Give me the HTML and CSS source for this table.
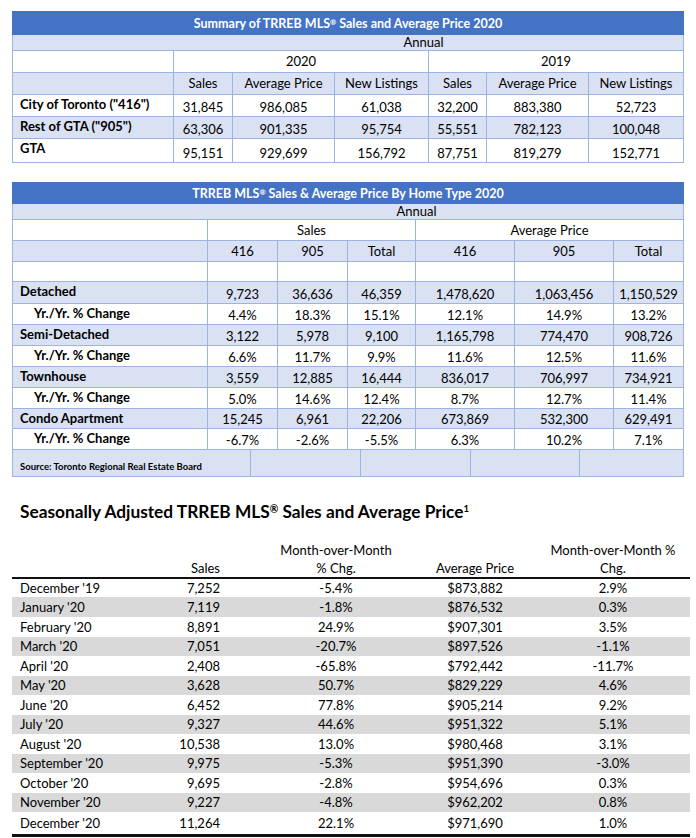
FILE: index.html
```html
<!DOCTYPE html>
<html>
<head>
<meta charset="utf-8">
<link rel="stylesheet" href="styles.css">
</head>
<body>
<div class="page">

<table class="grid t1">
  <colgroup>
    <col class="w161"><col class="w59"><col class="w102"><col class="w94"><col class="w58"><col class="w102"><col class="w95">
  </colgroup>
  <tr class="title"><td colspan="7">Summary of TRREB MLS<sup>®</sup> Sales and Average Price 2020</td></tr>
  <tr class="annual"><td colspan="7" class="ann1">Annual</td></tr>
  <tr class="mid h22"><td></td><td colspan="3">2020</td><td colspan="3">2019</td></tr>
  <tr class="mid h22 shade"><td></td><td>Sales</td><td>Average Price</td><td>New Listings</td><td>Sales</td><td>Average Price</td><td>New Listings</td></tr>
  <tr class="data h22"><td class="lbl">City of Toronto ("416")</td><td>31,845</td><td>986,085</td><td>61,038</td><td>32,200</td><td>883,380</td><td>52,723</td></tr>
  <tr class="data h22 shade"><td class="lbl">Rest of GTA ("905")</td><td>63,306</td><td>901,335</td><td>95,754</td><td>55,551</td><td>782,123</td><td>100,048</td></tr>
  <tr class="data h24"><td class="lbl">GTA</td><td>95,151</td><td>929,699</td><td>156,792</td><td>87,751</td><td>819,279</td><td>152,771</td></tr>
</table>

<table class="grid t2">
  <colgroup>
    <col class="w195"><col class="w70"><col class="w70"><col class="w68"><col class="w99"><col class="w99"><col class="w70">
  </colgroup>
  <tr class="title t2title"><td colspan="7">TRREB MLS<sup>®</sup> Sales &amp; Average Price By Home Type 2020</td></tr>
  <tr class="annual"><td colspan="7" class="ann2">Annual</td></tr>
  <tr class="mid h21"><td></td><td colspan="3">Sales</td><td colspan="3">Average Price</td></tr>
  <tr class="mid h21 shade"><td></td><td>416</td><td>905</td><td>Total</td><td>416</td><td>905</td><td>Total</td></tr>
  <tr class="mid h20"><td></td><td></td><td></td><td></td><td></td><td></td><td></td></tr>
  <tr class="data shade h22"><td class="lbl">Detached</td><td>9,723</td><td>36,636</td><td>46,359</td><td>1,478,620</td><td>1,063,456</td><td>1,150,529</td></tr>
  <tr class="data h21"><td class="lbl sub">Yr./Yr. % Change</td><td>4.4%</td><td>18.3%</td><td>15.1%</td><td>12.1%</td><td>14.9%</td><td>13.2%</td></tr>
  <tr class="data shade h21"><td class="lbl">Semi-Detached</td><td>3,122</td><td>5,978</td><td>9,100</td><td>1,165,798</td><td>774,470</td><td>908,726</td></tr>
  <tr class="data h21"><td class="lbl sub">Yr./Yr. % Change</td><td>6.6%</td><td>11.7%</td><td>9.9%</td><td>11.6%</td><td>12.5%</td><td>11.6%</td></tr>
  <tr class="data shade h21"><td class="lbl">Townhouse</td><td>3,559</td><td>12,885</td><td>16,444</td><td>836,017</td><td>706,997</td><td>734,921</td></tr>
  <tr class="data h21"><td class="lbl sub">Yr./Yr. % Change</td><td>5.0%</td><td>14.6%</td><td>12.4%</td><td>8.7%</td><td>12.7%</td><td>11.4%</td></tr>
  <tr class="data shade h20"><td class="lbl">Condo Apartment</td><td>15,245</td><td>6,961</td><td>22,206</td><td>673,869</td><td>532,300</td><td>629,491</td></tr>
  <tr class="data h21"><td class="lbl sub">Yr./Yr. % Change</td><td>-6.7%</td><td>-2.6%</td><td>-5.5%</td><td>6.3%</td><td>10.2%</td><td>7.1%</td></tr>
</table>
<table class="grid src">
  <colgroup>
    <col class="w238"><col class="w110"><col class="w110"><col class="w109"><col class="w104">
  </colgroup>
  <tr class="shade"><td class="srctxt">Source: Toronto Regional Real Estate Board</td><td></td><td></td><td></td><td></td></tr>
</table>

<h2 class="sa-title">Seasonally Adjusted TRREB MLS<sup>®</sup> Sales and Average Price<sup class="fn">1</sup></h2>

<table class="sa">
  <colgroup>
    <col class="s1"><col class="s2"><col class="s3"><col class="s4"><col class="s5">
  </colgroup>
  <thead>
  <tr class="sahead"><th></th><th class="num">Sales</th><th>Month-over-Month<br>% Chg.</th><th>Average Price</th><th class="last">Month-over-Month %<br>Chg.</th></tr>
  </thead>
  <tbody>
  <tr class="r18"><td>December '19</td><td class="num">7,252</td><td>-5.4%</td><td>$873,882</td><td class="last">2.9%</td></tr>
  <tr class="g r20"><td>January '20</td><td class="num">7,119</td><td>-1.8%</td><td>$876,532</td><td class="last">0.3%</td></tr>
  <tr class="r20"><td>February '20</td><td class="num">8,891</td><td>24.9%</td><td>$907,301</td><td class="last">3.5%</td></tr>
  <tr class="g r19"><td>March '20</td><td class="num">7,051</td><td>-20.7%</td><td>$897,526</td><td class="last">-1.1%</td></tr>
  <tr class="r20"><td>April '20</td><td class="num">2,408</td><td>-65.8%</td><td>$792,442</td><td class="last">-11.7%</td></tr>
  <tr class="g r19"><td>May '20</td><td class="num">3,628</td><td>50.7%</td><td>$829,229</td><td class="last">4.6%</td></tr>
  <tr class="r20"><td>June '20</td><td class="num">6,452</td><td>77.8%</td><td>$905,214</td><td class="last">9.2%</td></tr>
  <tr class="g r19"><td>July '20</td><td class="num">9,327</td><td>44.6%</td><td>$951,322</td><td class="last">5.1%</td></tr>
  <tr class="r20"><td>August '20</td><td class="num">10,538</td><td>13.0%</td><td>$980,468</td><td class="last">3.1%</td></tr>
  <tr class="g r19"><td>September '20</td><td class="num">9,975</td><td>-5.3%</td><td>$951,390</td><td class="last">-3.0%</td></tr>
  <tr class="r20"><td>October '20</td><td class="num">9,695</td><td>-2.8%</td><td>$954,696</td><td class="last">0.3%</td></tr>
  <tr class="g r19"><td>November '20</td><td class="num">9,227</td><td>-4.8%</td><td>$962,202</td><td class="last">0.8%</td></tr>
  <tr class="end"><td>December '20</td><td class="num">11,264</td><td>22.1%</td><td>$971,690</td><td class="last">1.0%</td></tr>
  </tbody>
</table>

</div>
</body>
</html>
```

FILE: styles.css
```css
html, body {
  margin: 0;
  padding: 0;
  background: #ffffff;
  overflow: hidden;
}
body {
  font-family: Lato, "Open Sans", "DejaVu Sans", sans-serif;
  color: #000000;
  font-size: 13px;
}
.page {
  padding: 11px 0 0 12px;
}

/* generic grid tables */
.grid {
  border-collapse: collapse;
  table-layout: fixed;
  width: 671px;
}
.grid td {
  border: 1px solid #9cb4e2;
  padding: 0 2px;
  text-align: center;
  vertical-align: bottom;
  line-height: 15px;
  white-space: nowrap;
  overflow: hidden;
}
.shade td { background: #d9e1f2; }

.w161 { width: 161px; } .w59 { width: 59px; } .w102 { width: 102px; }
.w94 { width: 94px; } .w58 { width: 58px; } .w95 { width: 95px; }
.w195 { width: 195px; } .w70 { width: 70px; } .w68 { width: 68px; } .w99 { width: 99px; }
.w238 { width: 238px; } .w110 { width: 110px; } .w109 { width: 109px; } .w104 { width: 104px; }

.title td {
  background: #4472c4;
  border-color: #4472c4;
  color: #ffffff;
  font-weight: 700;
  height: 22px;
  vertical-align: middle;
  font-size: 12.5px;
}
.t2title td { height: 20px; }
sup {
  font-size: 0.6em;
  vertical-align: 0.45em;
  line-height: 0;
}
.annual td {
  background: #d9e1f2;
  height: 15px;
  vertical-align: middle;
}
.ann1 { padding-left: 153px !important; }
.ann2 { padding-left: 139px !important; }

/* row heights: total = height + vertical padding + 1px border */
.mid td { vertical-align: middle; }
.mid.h22 td { height: 21px; }
.mid.h21 td { height: 20px; }
.mid.h20 td { height: 19px; }

.data td { padding-bottom: 1px; vertical-align: bottom; }
.data.h24 td { height: 22px; }
.data.h22 td { height: 20px; }
.data.h21 td { height: 19px; }
.data.h20 td { height: 18px; }

.data td.lbl {
  text-align: left;
  vertical-align: top;
  font-weight: 700;
  padding: 2px 0 0 7px;
}
.data.h24 td.lbl { height: 21px; }
.data.h22 td.lbl { height: 19px; }
.data.h21 td.lbl { height: 18px; }
.data.h20 td.lbl { height: 17px; }
.data td.sub { padding-left: 21px; }

.t2 { margin-top: 19px; }

.src td {
  border-top: none;
  height: 26px;
  vertical-align: bottom;
}
.src td.srctxt {
  text-align: left;
  font-weight: 700;
  font-size: 9.5px;
  height: 24px;
  padding: 0 0 2px 7px;
}

/* seasonally adjusted */
.sa-title {
  margin: 24px 0 0 8px;
  font-size: 17.3px;
  line-height: 22px;
  font-weight: 700;
  color: #000;
}
.sa-title .fn {
  font-size: 0.55em;
  vertical-align: 0.6em;
}
.sa {
  margin-top: 18px;
  border-collapse: collapse;
  table-layout: fixed;
  width: 678px;
}
.s1 { width: 148px; } .s2 { width: 107px; } .s3 { width: 138px; } .s4 { width: 140px; } .s5 { width: 145px; }
.sa th {
  font-weight: 400;
  line-height: 18px;
  height: 36px;
  padding: 0;
  vertical-align: bottom;
  text-align: center;
  border-bottom: 2px solid #111;
  white-space: nowrap;
}
.sa td {
  padding: 0;
  line-height: 17px;
  text-align: center;
  white-space: nowrap;
}
.sa td:first-child { text-align: left; padding-left: 8px; }
.sa .num { text-align: right; padding-right: 47px; }
.sa .last { padding-right: 9px; }
.sa tr.r18 td { height: 18px; }
.sa tr.r19 td { height: 19px; }
.sa tr.r20 td { height: 20px; }
.sa tr.g td { background: #d9d9d9; }
.sa tr.end td { border-bottom: 3px solid #111; height: 22px; vertical-align: middle; }
```
